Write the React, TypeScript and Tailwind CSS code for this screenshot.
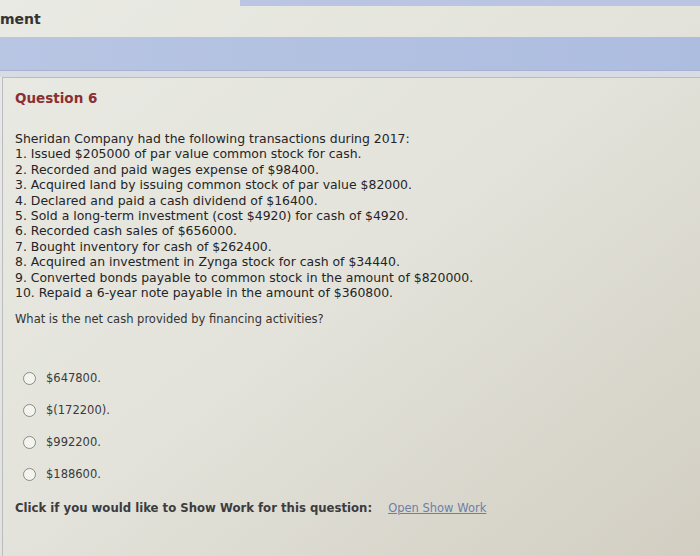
import React from "react";

const lines = [
  "1. Issued $205000 of par value common stock for cash.",
  "2. Recorded and paid wages expense of $98400.",
  "3. Acquired land by issuing common stock of par value $82000.",
  "4. Declared and paid a cash dividend of $16400.",
  "5. Sold a long-term investment (cost $4920) for cash of $4920.",
  "6. Recorded cash sales of $656000.",
  "7. Bought inventory for cash of $262400.",
  "8. Acquired an investment in Zynga stock for cash of $34440.",
  "9. Converted bonds payable to common stock in the amount of $820000.",
  "10. Repaid a 6-year note payable in the amount of $360800.",
];

const options = ["$647800.", "$(172200).", "$992200.", "$188600."];

export default function App() {
  return (
    <div
      className="w-[700px] h-[556px] overflow-hidden bg-gradient-to-br from-[#e9eae3] via-[#e3e3db] to-[#d2cec2] text-[#242426]"
      style={{ fontFamily: '"DejaVu Sans", Verdana, sans-serif' }}
    >
      <div className="h-[6px] ml-[240px] bg-[#b9c5e2]" />
      <div className="h-[31px] flex items-start">
        <span className="text-[14px] font-bold leading-[16px] mt-[5px] text-[#333]">ment</span>
      </div>
      <div className="h-[34px] bg-gradient-to-r from-[#b8c5e3] to-[#adbde0] border-b border-[#a6b2d0]" />
      <div className="h-[6px] bg-[#d6dbe4]" />
      <div className="ml-[2px] h-[480px] border-l border-t border-[#b9bcc4] pl-[12px] pt-[11px]">
        <div className="text-[13.5px] font-bold text-[#8a2f33] leading-[18px]">Question 6</div>
        <div className="mt-[24px] text-[12.45px] leading-[15.4px]">
          <div>Sheridan Company had the following transactions during 2017:</div>
          {lines.map((l) => (
            <div key={l}>{l}</div>
          ))}
        </div>
        <div className="mt-[12px] text-[11.5px] leading-[15px] text-[#333]">
          What is the net cash provided by financing activities?
        </div>
        <div className="mt-[44px] ml-[8px] flex flex-col gap-[17px]">
          {options.map((o) => (
            <div key={o} className="flex items-center h-[15px]">
              <span className="w-[13px] h-[13px] rounded-full border-[1.5px] border-[#8a8a8a] bg-[#f4f4ef]" />
              <span className="ml-[10px] text-[11.5px] text-[#3a3a3a]">{o}</span>
            </div>
          ))}
        </div>
        <div className="mt-[18px] flex items-baseline">
          <span className="text-[11.7px] font-bold text-[#3b3b40]">
            Click if you would like to Show Work for this question:
          </span>
          <span className="ml-[16px] text-[11.5px] underline text-[#6d7fa7]">Open Show Work</span>
        </div>
      </div>
    </div>
  );
}
